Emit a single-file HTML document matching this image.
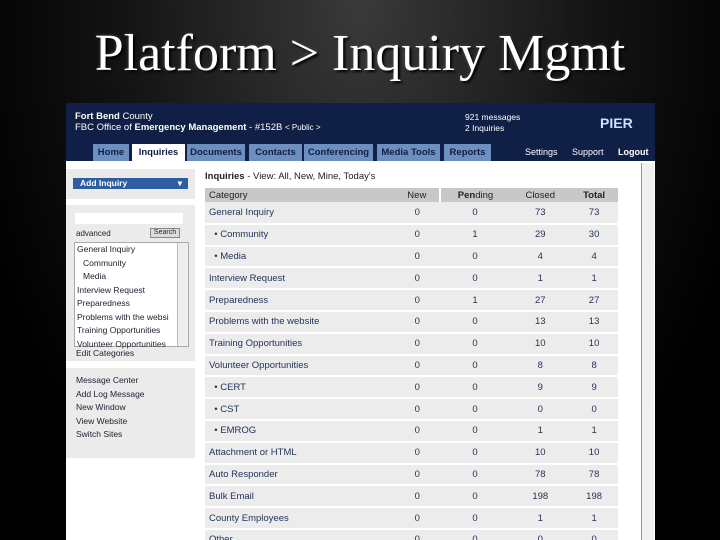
<!DOCTYPE html>
<html><head><meta charset="utf-8"><style>
*{margin:0;padding:0;box-sizing:border-box}
body{width:720px;height:540px;overflow:hidden;background:radial-gradient(ellipse at 50% 0%,#3a3a3a 0%,#151515 45%,#000 80%);font-family:"Liberation Sans",sans-serif;position:relative}
.title{position:absolute;top:24px;left:0;width:720px;text-align:center;font-family:"Liberation Serif",serif;font-size:52px;color:#fff;text-shadow:2px 2px 2px #000,0 0 3px #555;white-space:nowrap}
.shot{position:absolute;left:66px;top:103px;width:589px;height:437px;background:#fff;overflow:hidden}
.hdr{position:absolute;left:0;top:0;width:589px;height:58px;background:#0f1f45}
.hdr .t{position:absolute;color:#fff;font-size:9.5px;line-height:11px}
.tab{position:absolute;top:41px;height:17px;background:#6d8fc0;color:#0f1f45;font-size:9.5px;font-weight:bold;line-height:17px;text-align:center}
.tab.on{background:#fff}
.nr{position:absolute;top:41px;color:#fff;font-size:9px;line-height:17px}
.side{position:absolute;left:0;width:129px;background:#ebebeb}
.side div{font-size:8.5px;color:#223;line-height:13.5px;padding-left:10px}
table{position:absolute;left:139px;top:85px;width:413px;border-collapse:collapse;font-size:9.5px;color:#23335a}
td{height:21.8px;background:#ececec;border-bottom:2px solid #fff;padding:0 4px}
th{height:14px;background:#c8c8c8;font-weight:normal;text-align:left;padding:0 4px;font-size:9.5px;color:#222}
.n{text-align:center}
</style></head><body>
<div class="title">Platform &gt; Inquiry Mgmt</div>
<div class="shot">
 <div class="hdr">
  <div class="t" style="left:9px;top:8px"><b>Fort Bend</b> County<br>FBC Office of <b>Emergency Management</b> - #152B <span style="font-size:8px">&lt; Public &gt;</span></div>
  <div class="t" style="left:399px;top:9px;font-size:8.5px">921 messages<br>2 Inquiries</div>
  <div class="t" style="left:534px;top:15px;font-size:14px;font-weight:bold;color:#cfe0ff">PIER</div>
  <div class="tab" style="left:27px;width:36px">Home</div>
  <div class="tab on" style="left:66px;width:53px">Inquiries</div>
  <div class="tab" style="left:121px;width:58px">Documents</div>
  <div class="tab" style="left:183px;width:53px">Contacts</div>
  <div class="tab" style="left:238px;width:69px">Conferencing</div>
  <div class="tab" style="left:311px;width:63px">Media Tools</div>
  <div class="tab" style="left:378px;width:47px">Reports</div>
  <div class="nr" style="left:459px">Settings</div>
  <div class="nr" style="left:506px">Support</div>
  <div class="nr" style="left:552px;font-weight:bold">Logout</div>
 </div>
 <div class="side" style="top:66px;height:30px"><div style="position:absolute;left:7px;top:9px;width:115px;height:11px;background:#2f5da3;color:#fff;font-weight:bold;font-size:8.5px;line-height:11px;padding-left:7px">Add Inquiry<span style="float:right;padding-right:6px">▾</span></div></div>
 <div class="side" style="top:102px;height:156px">
  <div style="position:absolute;left:9px;top:8px;width:108px;height:11px;background:#fff;padding:0"></div>
  <div style="position:absolute;left:0;top:22px;font-size:8px">advanced</div>
  <div style="position:absolute;left:84px;top:23px;width:30px;height:10px;background:#ddd;border:1px solid #888;font-size:7px;line-height:8px;padding:0;text-align:center">Search</div>
  <div style="position:absolute;left:8px;top:37px;width:115px;height:105px;background:#fff;border:1px solid #aaa;padding:0">
   <div style="padding-left:2px">General Inquiry</div><div style="padding-left:8px">Community</div><div style="padding-left:8px">Media</div><div style="padding-left:2px">Interview Request</div><div style="padding-left:2px">Preparedness</div><div style="padding-left:2px">Problems with the websi</div><div style="padding-left:2px">Training Opportunities</div><div style="padding-left:2px">Volunteer Opportunities</div>
   <div style="position:absolute;right:0;top:0;width:11px;height:103px;background:#eee;border-left:1px solid #bbb;padding:0"></div>
  </div>
  <div style="position:absolute;left:0;top:142px">Edit Categories</div>
 </div>
 <div class="side" style="top:265px;height:90px;padding-top:6px">
  <div>Message Center</div><div>Add Log Message</div><div>New Window</div><div>View Website</div><div>Switch Sites</div>
 </div>
 <div style="position:absolute;left:139px;top:68px;font-size:9.5px;color:#222"><b>Inquiries</b> - View: All, New, Mine, Today's</div>
 <table>
  <tr><th style="width:190px">Category</th><th class="n">New</th><th class="n" style="border-left:2px solid #fff"><b>Pen</b>ding</th><th class="n">Closed</th><th class="n"><b>Total</b></th></tr>
  <tr><td>General Inquiry</td><td class="n">0</td><td class="n">0</td><td class="n">73</td><td class="n">73</td></tr>
  <tr><td>&nbsp;&nbsp;• Community</td><td class="n">0</td><td class="n">1</td><td class="n">29</td><td class="n">30</td></tr>
  <tr><td>&nbsp;&nbsp;• Media</td><td class="n">0</td><td class="n">0</td><td class="n">4</td><td class="n">4</td></tr>
  <tr><td>Interview Request</td><td class="n">0</td><td class="n">0</td><td class="n">1</td><td class="n">1</td></tr>
  <tr><td>Preparedness</td><td class="n">0</td><td class="n">1</td><td class="n">27</td><td class="n">27</td></tr>
  <tr><td>Problems with the website</td><td class="n">0</td><td class="n">0</td><td class="n">13</td><td class="n">13</td></tr>
  <tr><td>Training Opportunities</td><td class="n">0</td><td class="n">0</td><td class="n">10</td><td class="n">10</td></tr>
  <tr><td>Volunteer Opportunities</td><td class="n">0</td><td class="n">0</td><td class="n">8</td><td class="n">8</td></tr>
  <tr><td>&nbsp;&nbsp;• CERT</td><td class="n">0</td><td class="n">0</td><td class="n">9</td><td class="n">9</td></tr>
  <tr><td>&nbsp;&nbsp;• CST</td><td class="n">0</td><td class="n">0</td><td class="n">0</td><td class="n">0</td></tr>
  <tr><td>&nbsp;&nbsp;• EMROG</td><td class="n">0</td><td class="n">0</td><td class="n">1</td><td class="n">1</td></tr>
  <tr><td>Attachment or HTML</td><td class="n">0</td><td class="n">0</td><td class="n">10</td><td class="n">10</td></tr>
  <tr><td>Auto Responder</td><td class="n">0</td><td class="n">0</td><td class="n">78</td><td class="n">78</td></tr>
  <tr><td>Bulk Email</td><td class="n">0</td><td class="n">0</td><td class="n">198</td><td class="n">198</td></tr>
  <tr><td>County Employees</td><td class="n">0</td><td class="n">0</td><td class="n">1</td><td class="n">1</td></tr>
  <tr><td>Other</td><td class="n">0</td><td class="n">0</td><td class="n">0</td><td class="n">0</td></tr>
 </table>
 <div style="position:absolute;left:575px;top:60px;width:13px;height:377px;background:#f0f0f0;border-left:1px solid #999"></div>
</div>
</body></html>
